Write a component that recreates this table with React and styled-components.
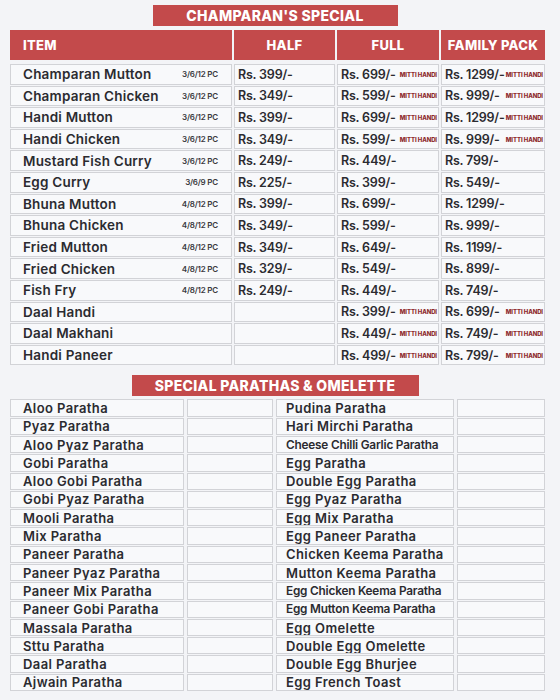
import React from 'react';
import styled, { createGlobalStyle } from 'styled-components';

const colors = {
  page: '#f3f4f7',
  cell: '#f8f9fb',
  line: '#d2d3d7',
  red: '#c34a4b',
  text: '#2b2b30',
  handi: '#8e2b2e',
};

const GlobalStyle = createGlobalStyle`
  body {
    margin: 0;
    background: ${colors.page};
    font-family: Inter, "Open Sans", sans-serif;
    color: ${colors.text};
  }
`;

const Page = styled.div`
  width: 535px;
  padding: 5px 15px 0 10px;
  display: flex;
  flex-direction: column;
  align-items: center;
`;

const Banner = styled.div`
  width: ${p => p.width}px;
  height: 21px;
  margin-left: -5px;
  margin-top: ${p => p.top || 0}px;
  margin-bottom: ${p => p.gap}px;
  background: ${colors.red};
  color: #fff;
  font-weight: 800;
  font-size: 14px;
  letter-spacing: 0.3px;
  display: flex;
  align-items: center;
  justify-content: center;
`;

const SpecialGrid = styled.div`
  width: 100%;
  display: grid;
  grid-template-columns: 222px 101px 102px 104px;
  column-gap: 2px;
`;

const HeadRow = styled(SpecialGrid)`
  height: 30px;
  margin-bottom: 4px;
`;

const HeadCell = styled.div`
  background: ${colors.red};
  color: #fff;
  font-weight: 800;
  font-size: 13px;
  letter-spacing: 0.3px;
  display: flex;
  align-items: center;
  justify-content: ${p => (p.left ? 'flex-start' : 'center')};
  padding-left: ${p => (p.left ? '13px' : '0')};
`;

const BodyGrid = styled(SpecialGrid)`
  grid-auto-rows: 20.6px;
  row-gap: 1px;
`;

const Cell = styled.div`
  background: ${colors.cell};
  border: 1px solid ${colors.line};
  box-sizing: border-box;
  display: flex;
  align-items: center;
  justify-content: space-between;
  padding: 0 ${p => p.pr || 1}px 0 ${p => p.pl || 3}px;
  white-space: nowrap;
`;

const ItemName = styled.span`
  font-size: 13.5px;
  font-weight: 600;
  letter-spacing: 0.2px;
`;

const Pieces = styled.span`
  font-size: 8px;
  font-weight: 600;
  color: #3a3a40;
  letter-spacing: -0.2px;
`;

const Price = styled.span`
  font-size: 12.5px;
  font-weight: 600;
  letter-spacing: -0.2px;
`;

const Handi = styled.span`
  font-size: 6px;
  font-weight: 800;
  letter-spacing: -0.1px;
  color: ${colors.handi};
`;

const ParathaGrid = styled.div`
  width: 100%;
  display: grid;
  grid-template-columns: 174px 86px 178px 88px;
  column-gap: 3px;
  grid-auto-rows: 17.3px;
  row-gap: 1px;
`;

const ParathaCell = styled.div`
  background: ${colors.cell};
  border: 1px solid ${colors.line};
  box-sizing: border-box;
  display: flex;
  align-items: center;
  padding-left: ${p => p.pl || 0}px;
  font-size: ${p => (p.tight ? '11.8px' : '13px')};
  font-weight: 600;
  letter-spacing: ${p => (p.tight ? '-0.2px' : '0.4px')};
  white-space: nowrap;
  overflow: hidden;
`;

const specials = [
  ['Champaran Mutton', '3/6/12 PC', 'Rs. 399/-', 'Rs. 699/-*', 'Rs. 1299/-*'],
  ['Champaran Chicken', '3/6/12 PC', 'Rs. 349/-', 'Rs. 599/-*', 'Rs. 999/-*'],
  ['Handi Mutton', '3/6/12 PC', 'Rs. 399/-', 'Rs. 699/-*', 'Rs. 1299/-*'],
  ['Handi Chicken', '3/6/12 PC', 'Rs. 349/-', 'Rs. 599/-*', 'Rs. 999/-*'],
  ['Mustard Fish Curry', '3/6/12 PC', 'Rs. 249/-', 'Rs. 449/-', 'Rs. 799/-'],
  ['Egg Curry', '3/6/9 PC', 'Rs. 225/-', 'Rs. 399/-', 'Rs. 549/-'],
  ['Bhuna Mutton', '4/8/12 PC', 'Rs. 399/-', 'Rs. 699/-', 'Rs. 1299/-'],
  ['Bhuna Chicken', '4/8/12 PC', 'Rs. 349/-', 'Rs. 599/-', 'Rs. 999/-'],
  ['Fried Mutton', '4/8/12 PC', 'Rs. 349/-', 'Rs. 649/-', 'Rs. 1199/-'],
  ['Fried Chicken', '4/8/12 PC', 'Rs. 329/-', 'Rs. 549/-', 'Rs. 899/-'],
  ['Fish Fry', '4/8/12 PC', 'Rs. 249/-', 'Rs. 449/-', 'Rs. 749/-'],
  ['Daal Handi', '', '', 'Rs. 399/-*', 'Rs. 699/-*'],
  ['Daal Makhani', '', '', 'Rs. 449/-*', 'Rs. 749/-*'],
  ['Handi Paneer', '', '', 'Rs. 499/-*', 'Rs. 799/-*'],
];

const leftParathas = [
  'Aloo Paratha', 'Pyaz Paratha', 'Aloo Pyaz Paratha', 'Gobi Paratha',
  'Aloo Gobi Paratha', 'Gobi Pyaz Paratha', 'Mooli Paratha', 'Mix Paratha',
  'Paneer Paratha', 'Paneer Pyaz Paratha', 'Paneer Mix Paratha', 'Paneer Gobi Paratha',
  'Massala Paratha', 'Sttu Paratha', 'Daal Paratha', 'Ajwain Paratha',
];

const rightParathas = [
  'Pudina Paratha', 'Hari Mirchi Paratha', 'Cheese Chilli Garlic Paratha', 'Egg Paratha',
  'Double Egg Paratha', 'Egg Pyaz Paratha', 'Egg Mix Paratha', 'Egg Paneer Paratha',
  'Chicken Keema Paratha', 'Mutton Keema Paratha', 'Egg Chicken Keema Paratha',
  'Egg Mutton Keema Paratha', 'Egg Omelette', 'Double Egg Omelette', 'Double Egg Bhurjee',
  'Egg French Toast',
];

const tightNames = ['Cheese Chilli Garlic Paratha', 'Egg Chicken Keema Paratha', 'Egg Mutton Keema Paratha'];

function PriceCell({ value }) {
  const handi = value.endsWith('*');
  return (
    <Cell>
      <Price>{handi ? value.slice(0, -1) : value}</Price>
      {handi && <Handi>MITTI HANDI</Handi>}
    </Cell>
  );
}

export default function App() {
  return (
    <Page>
      <GlobalStyle />

      <Banner width={245} gap={4}>CHAMPARAN'S SPECIAL</Banner>

      <HeadRow>
        <HeadCell left>ITEM</HeadCell>
        <HeadCell>HALF</HeadCell>
        <HeadCell>FULL</HeadCell>
        <HeadCell>FAMILY PACK</HeadCell>
      </HeadRow>

      <BodyGrid>
        {specials.map(([name, pcs, half, full, family]) => (
          <React.Fragment key={name}>
            <Cell pl={12} pr={13}>
              <ItemName>{name}</ItemName>
              <Pieces>{pcs}</Pieces>
            </Cell>
            <PriceCell value={half} />
            <PriceCell value={full} />
            <PriceCell value={family} />
          </React.Fragment>
        ))}
      </BodyGrid>

      <Banner width={287} top={10} gap={3}>SPECIAL PARATHAS &amp; OMELETTE</Banner>

      <ParathaGrid>
        {leftParathas.map((name, i) => (
          <React.Fragment key={name}>
            <ParathaCell pl={12}>{name}</ParathaCell>
            <ParathaCell />
            <ParathaCell pl={9} tight={tightNames.includes(rightParathas[i])}>{rightParathas[i]}</ParathaCell>
            <ParathaCell />
          </React.Fragment>
        ))}
      </ParathaGrid>
    </Page>
  );
}
